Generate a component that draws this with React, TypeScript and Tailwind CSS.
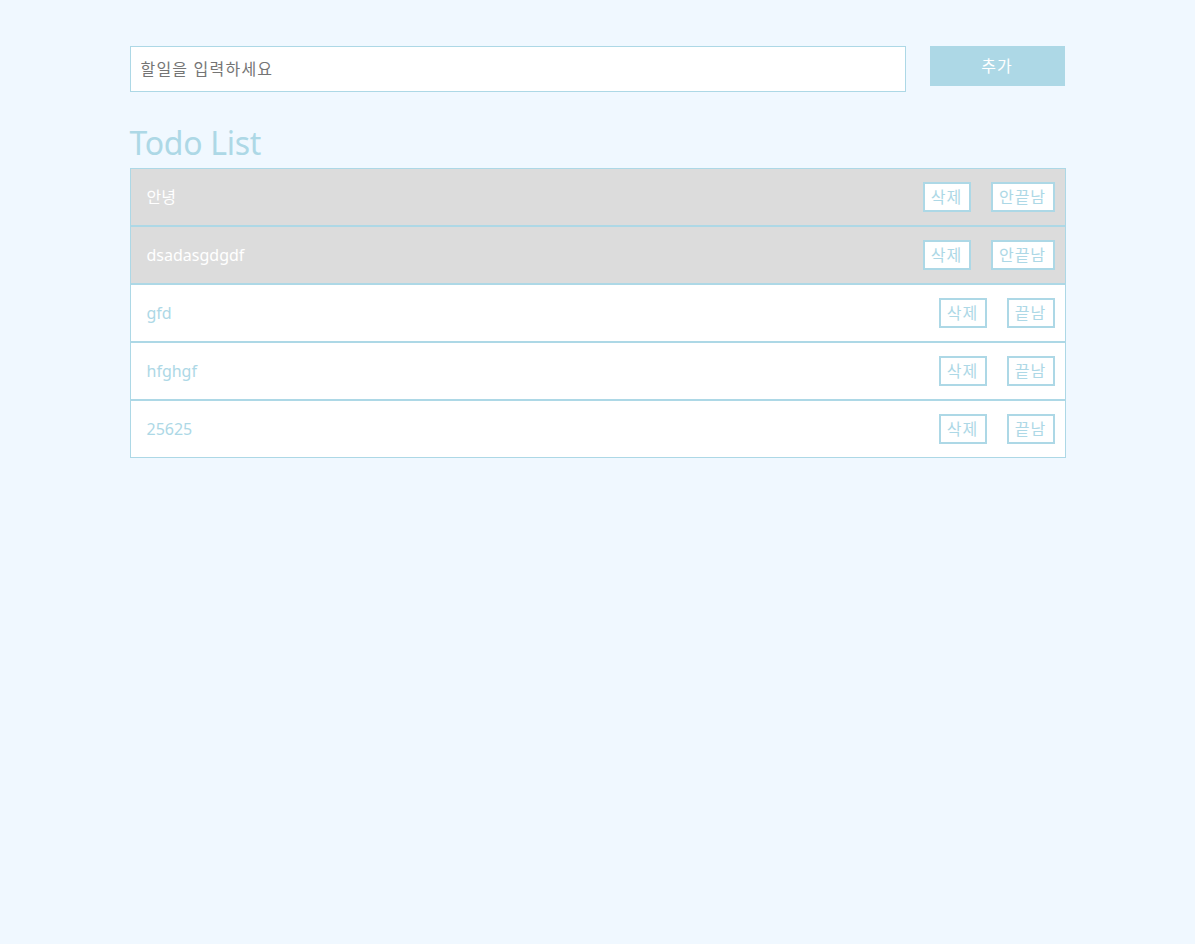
import React, { useState } from 'react';

type Todo = { id: number; text: string; done: boolean };

const INITIAL: Todo[] = [
  { id: 1, text: '안녕', done: true },
  { id: 2, text: 'dsadasgdgdf', done: true },
  { id: 3, text: 'gfd', done: false },
  { id: 4, text: 'hfghgf', done: false },
  { id: 5, text: '25625', done: false },
];

const FONT = "font-['Noto_Sans','Noto_Sans_CJK_KR',sans-serif]";

const btn =
  'h-[30px] border-2 border-[#add8e6] bg-white text-[#add8e6] text-[16px] leading-none tracking-[1px] flex items-center justify-center';

export default function App() {
  const [todos, setTodos] = useState<Todo[]>(INITIAL);
  const [text, setText] = useState('');

  const add = () => {
    if (!text.trim()) return;
    setTodos([...todos, { id: Date.now(), text, done: false }]);
    setText('');
  };

  return (
    <div className={`min-h-screen bg-[#f0f8ff] pt-[46px] ${FONT}`}>
      <div className="w-[936px] mx-auto">
        <div className="flex items-start gap-[24px]">
          <input
            value={text}
            onChange={e => setText(e.target.value)}
            placeholder="할일을 입력하세요"
            className="w-[776px] h-[46px] border border-[#add8e6] bg-white px-[10px] text-[16px] tracking-[1.2px] text-[#333] placeholder:text-[#757575] outline-none"
          />
          <button
            onClick={add}
            className="w-[135px] h-[40px] bg-[#add8e6] text-white text-[16px] tracking-[1px]"
          >
            추가
          </button>
        </div>

        <h1 className="mt-[30px] mb-[4px] text-[32px] leading-[42px] text-[#add8e6] tracking-[-0.3px]">Todo List</h1>

        <ul>
          {todos.map(t => (
            <li
              key={t.id}
              className={`flex items-center h-[58px] border border-[#add8e6] pl-[16px] pr-[10px] ${
                t.done ? 'bg-[#dcdcdc] text-white' : 'bg-white text-[#add8e6]'
              }`}
            >
              <span className="flex-1 text-[16px]">{t.text}</span>
              <div className="flex gap-[20px]">
                <button
                  onClick={() => setTodos(todos.filter(x => x.id !== t.id))}
                  className={`${btn} w-[48px]`}
                >
                  삭제
                </button>
                <button
                  onClick={() => setTodos(todos.map(x => (x.id === t.id ? { ...x, done: !x.done } : x)))}
                  className={`${btn} ${t.done ? 'w-[64px]' : 'w-[48px]'}`}
                >
                  {t.done ? '안끝남' : '끝남'}
                </button>
              </div>
            </li>
          ))}
        </ul>
      </div>
    </div>
  );
}
